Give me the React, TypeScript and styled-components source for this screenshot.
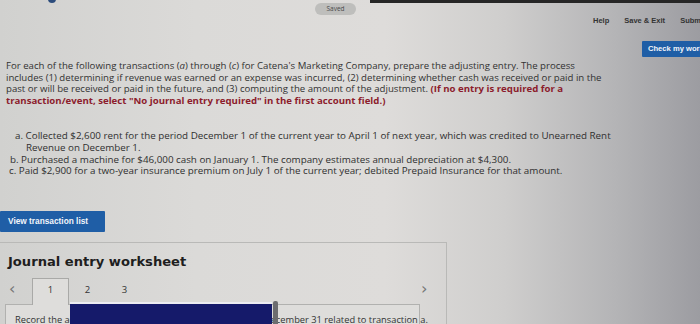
import React from "react";
import styled, { createGlobalStyle } from "styled-components";

const GlobalStyle = createGlobalStyle`
  html, body {
    margin: 0;
    padding: 0;
  }
  body {
    width: 700px;
    height: 324px;
    overflow: hidden;
    background: linear-gradient(90deg, #d1d1cf 0%, #dbdad8 28%, #dedcda 55%, #cfcecd 72%, #b4b4b6 88%, #9c9ca1 100%);
    font-family: "Open Sans", "Liberation Sans", Arial, sans-serif;
    color: #2d2d2d;
  }
`;

function App() {
  return (
    <Page>
      <GlobalStyle />
      <TopRow>
        <AvatarDot />
        <SavedPill>Saved</SavedPill>
        <Bezel />
      </TopRow>
      <NavRow>
        <NavLink>Help</NavLink>
        <NavLink>Save &amp; Exit</NavLink>
        <NavLink>Submit</NavLink>
      </NavRow>
      <CheckRow>
        <BlueButton $width={70}>Check my work</BlueButton>
      </CheckRow>

      <Intro>
        For each of the following transactions (<i>a</i>) through (<i>c</i>) for Catena's Marketing Company, prepare the adjusting entry. The process
        <br />
        includes (1) determining if revenue was earned or an expense was incurred, (2) determining whether cash was received or paid in the
        <br />
        past or will be received or paid in the future, and (3) computing the amount of the adjustment. <Warn>(If no entry is required for a</Warn>
        <br />
        <Warn>transaction/event, select "No journal entry required" in the first account field.)</Warn>
      </Intro>

      <Transactions>
        <Item $indent={15}>
          a. Collected $2,600 rent for the period December 1 of the current year to April 1 of next year, which was credited to Unearned Rent
          <br />
          Revenue on December 1.
        </Item>
        <Item $indent={10}>b. Purchased a machine for $46,000 cash on January 1. The company estimates annual depreciation at $4,300.</Item>
        <Item $indent={9}>c. Paid $2,900 for a two-year insurance premium on July 1 of the current year; debited Prepaid Insurance for that amount.</Item>
      </Transactions>

      <ListRow>
        <BlueButton $width={105}>View transaction list</BlueButton>
      </ListRow>

      <Worksheet>
        <WorksheetTitle>Journal entry worksheet</WorksheetTitle>
        <TabBar>
          <Arrow>&lsaquo;</Arrow>
          <Tab $active>1</Tab>
          <Tab>2</Tab>
          <Tab>3</Tab>
          <TabSpacer />
          <Arrow>&rsaquo;</Arrow>
        </TabBar>
        <EntryPanel>
          <EntryText>Record the adjusting entry for the rent earned to date on December 31 related to transaction a.</EntryText>
        </EntryPanel>
        <Dropdown>
          <DropdownScroll />
        </Dropdown>
      </Worksheet>
    </Page>
  );
}

const Page = styled.div`
  display: flex;
  flex-direction: column;
  width: 700px;
  height: 324px;
  overflow: hidden;
`;

const TopRow = styled.div`
  display: flex;
  align-items: flex-start;
  height: 15px;
`;

const AvatarDot = styled.div`
  margin: -5px 0 0 48px;
  width: 8px;
  height: 8px;
  border-radius: 50%;
  background: #2c4c7c;
`;

const SavedPill = styled.div`
  margin: 3px 0 0 259px;
  width: 41px;
  height: 12px;
  border-radius: 6px;
  background: #bebebc;
  color: #4a4a4a;
  font-size: 6.5px;
  line-height: 12px;
  text-align: center;
`;

const Bezel = styled.div`
  flex: 1;
  margin-left: 14px;
  height: 3px;
  background: #262626;
`;

const NavRow = styled.div`
  display: flex;
  gap: 15px;
  padding-left: 593px;
  height: 11px;
  white-space: nowrap;
`;

const NavLink = styled.span`
  font-family: "Liberation Sans", Arial, sans-serif;
  font-size: 7.5px;
  line-height: 11px;
  font-weight: 700;
  color: #333;
`;

const CheckRow = styled.div`
  display: flex;
  padding: 15px 0 0 642px;
  white-space: nowrap;
`;

const BlueButton = styled.div<{ $width: number }>`
  flex: none;
  width: ${(p) => p.$width}px;
  box-sizing: border-box;
  padding-left: 6px;
  height: 16px;
  background: #1f5ea6;
  border-radius: 1px;
  color: #f2f5fa;
  font-family: "Liberation Sans", Arial, sans-serif;
  font-size: 7.6px;
  font-weight: 700;
  line-height: 16px;
`;

const Intro = styled.p`
  margin: 3px 0 0;
  padding-left: 6px;
  font-size: 9.65px;
  line-height: 11.6px;
  white-space: nowrap;
  color: #323232;
`;

const Warn = styled.span`
  color: #8c1c2c;
  font-weight: 700;
`;

const Transactions = styled.div`
  display: flex;
  flex-direction: column;
  margin-top: 24px;
  font-size: 9.8px;
  line-height: 11.7px;
  white-space: nowrap;
  color: #2f2f2f;
`;

const Item = styled.div<{ $indent: number }>`
  padding-left: ${(p) => p.$indent + 11}px;
  text-indent: -11px;
`;

const ListRow = styled.div`
  display: flex;
  margin-top: 34px;

  & > div {
    height: 21px;
    line-height: 21px;
    font-size: 8.3px;
    padding-left: 8px;
  }
`;

const Worksheet = styled.div`
  position: relative;
  margin-top: 10px;
  width: 446px;
  flex: 1;
  border-top: 1px solid #b9b9b7;
  border-right: 1px solid #b9b9b7;
`;

const WorksheetTitle = styled.h2`
  margin: 11px 0 0 8px;
  font-family: "DejaVu Sans", Verdana, sans-serif;
  font-size: 13.1px;
  line-height: 16px;
  font-weight: 700;
  color: #1e1e1e;
`;

const TabBar = styled.div`
  display: flex;
  align-items: stretch;
  margin: 8px 0 0 5px;
  width: 439px;
  height: 26px;
`;

const Arrow = styled.div`
  width: 27px;
  padding-left: 4px;
  box-sizing: border-box;
  font-family: "DejaVu Sans", sans-serif;
  font-size: 16px;
  line-height: 22px;
  color: #777;
`;

const TabSpacer = styled.div`
  flex: 1;
`;

const Tab = styled.div<{ $active?: boolean }>`
  position: relative;
  z-index: 1;
  width: 37px;
  box-sizing: border-box;
  text-align: center;
  font-size: 9.5px;
  line-height: 22px;
  color: #333;
  border: 1px solid ${(p) => (p.$active ? "#a9a9a7" : "transparent")};
  border-bottom: none;
  margin-bottom: -1px;
  background: ${(p) => (p.$active ? "#dedddb" : "transparent")};
`;

const EntryPanel = styled.div`
  margin-left: 5px;
  width: 415px;
  height: 30px;
  box-sizing: border-box;
  border: 1px solid #b1b1af;
  background: #dedddb;
  padding: 9px 0 0 9px;
`;

const EntryText = styled.div`
  font-size: 9.3px;
  line-height: 11px;
  white-space: nowrap;
  color: #333;
`;

const Dropdown = styled.div`
  position: absolute;
  left: 70px;
  top: 59px;
  width: 202px;
  height: 30px;
  background: #151a6a;
  border-top: 2px solid #ececf2;
`;

const DropdownScroll = styled.div`
  position: absolute;
  right: -6px;
  top: -3px;
  width: 5px;
  height: 30px;
  background: #6d6d70;
  border-radius: 2px;
`;

export default App;
